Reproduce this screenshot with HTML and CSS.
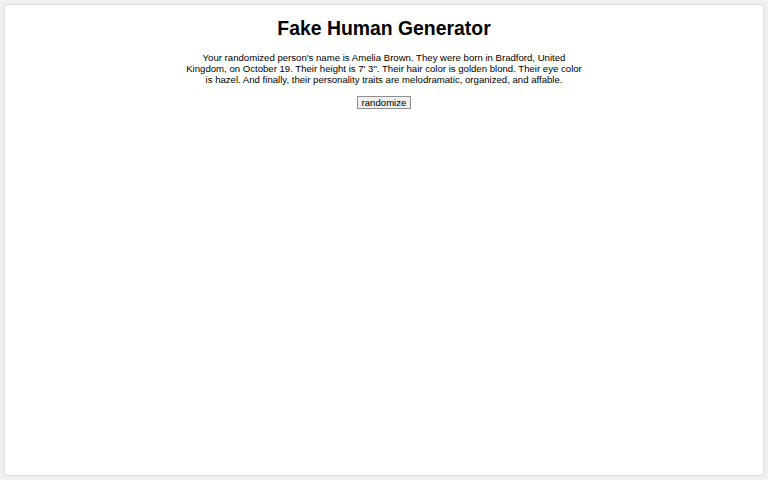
FILE: index.html
```html
<!DOCTYPE html>
<html lang="en">
<head>
<meta charset="utf-8">
<title>Fake Human Generator</title>
<link rel="stylesheet" href="styles.css">
</head>
<body>
<main class="card">
  <h1 class="title">Fake Human Generator</h1>
  <p class="bio">Your randomized person's name is Amelia Brown. They were born in Bradford, United Kingdom, on October 19. Their height is 7' 3". Their hair color is golden blond. Their eye color is hazel. And finally, their personality traits are melodramatic, organized, and affable.</p>
  <button class="btn" type="button">randomize</button>
</main>
</body>
</html>
```

FILE: styles.css
```css
html, body {
  height: 100%;
}
body {
  margin: 0;
  padding: 4px;
  box-sizing: border-box;
  background: #f0f0f0;
  font-family: "Liberation Sans", Arial, sans-serif;
  color: #000;
}
.card {
  box-sizing: border-box;
  height: 100%;
  background: #fff;
  border: 1px solid #dcdcdc;
  display: flex;
  flex-direction: column;
  align-items: center;
  padding-top: 11px;
}
.title {
  margin: 0;
  font-size: 19.4px;
  font-weight: bold;
  line-height: 24px;
}
.bio {
  width: 400px;
  margin: 12px 0 0;
  font-size: 9.6px;
  line-height: 11px;
  text-align: center;
}
.btn {
  margin-top: 11px;
  font-family: "Liberation Sans", Arial, sans-serif;
  font-size: 9.6px;
  line-height: 11px;
  padding: 0 4px;
  background: #efefef;
  border: 1px solid #8f8f8f;
  border-radius: 0;
  color: #000;
}
```
